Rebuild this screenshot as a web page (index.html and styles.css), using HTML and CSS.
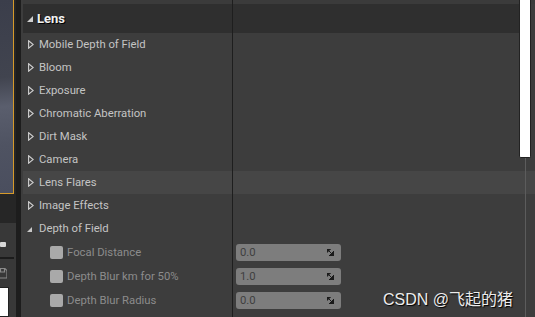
FILE: index.html
```html
<!DOCTYPE html>
<html>
<head>
<meta charset="utf-8">
<link rel="stylesheet" href="styles.css">
</head>
<body>
<div class="app">
  <div class="left">
    <div class="viewport"></div>
    <div class="tools">
      <div class="tool-icon"></div>
      <div class="tool-line"></div>
      <svg class="save" width="8" height="12" viewBox="0 0 8 12"><path d="M0 1.5 H6 L8 3.5 V11 H0 Z M1.5 1.5 V5 H5.5 V1.5" fill="none" stroke="#8a8a8a" stroke-width="1.2"/></svg>
      <div class="white-box"></div>
    </div>
  </div>
  <div class="gutter"></div>
  <div class="details">
    <div class="top-strip"></div>
    <div class="header"><span class="tri-down"></span><span class="header-text">Lens</span></div>
    <div class="row"><svg class="tri-right" width="6" height="9" viewBox="0 0 6 9"><path d="M0.6 0.8 L5.2 4.5 L0.6 8.2 Z" fill="none" stroke="#cfcfcf" stroke-width="1.1"/></svg>Mobile Depth of Field</div>
    <div class="row"><svg class="tri-right" width="6" height="9" viewBox="0 0 6 9"><path d="M0.6 0.8 L5.2 4.5 L0.6 8.2 Z" fill="none" stroke="#cfcfcf" stroke-width="1.1"/></svg>Bloom</div>
    <div class="row"><svg class="tri-right" width="6" height="9" viewBox="0 0 6 9"><path d="M0.6 0.8 L5.2 4.5 L0.6 8.2 Z" fill="none" stroke="#cfcfcf" stroke-width="1.1"/></svg>Exposure</div>
    <div class="row"><svg class="tri-right" width="6" height="9" viewBox="0 0 6 9"><path d="M0.6 0.8 L5.2 4.5 L0.6 8.2 Z" fill="none" stroke="#cfcfcf" stroke-width="1.1"/></svg>Chromatic Aberration</div>
    <div class="row"><svg class="tri-right" width="6" height="9" viewBox="0 0 6 9"><path d="M0.6 0.8 L5.2 4.5 L0.6 8.2 Z" fill="none" stroke="#cfcfcf" stroke-width="1.1"/></svg>Dirt Mask</div>
    <div class="row"><svg class="tri-right" width="6" height="9" viewBox="0 0 6 9"><path d="M0.6 0.8 L5.2 4.5 L0.6 8.2 Z" fill="none" stroke="#cfcfcf" stroke-width="1.1"/></svg>Camera</div>
    <div class="row hover"><svg class="tri-right" width="6" height="9" viewBox="0 0 6 9"><path d="M0.6 0.8 L5.2 4.5 L0.6 8.2 Z" fill="none" stroke="#cfcfcf" stroke-width="1.1"/></svg>Lens Flares</div>
    <div class="row"><svg class="tri-right" width="6" height="9" viewBox="0 0 6 9"><path d="M0.6 0.8 L5.2 4.5 L0.6 8.2 Z" fill="none" stroke="#cfcfcf" stroke-width="1.1"/></svg>Image Effects</div>
    <div class="row"><span class="tri-down small"></span>Depth of Field</div>
    <div class="prop">
      <div class="prop-name"><span class="check"></span>Focal Distance</div>
      <div class="value">0.0<svg class="spin" width="7" height="7" viewBox="0 0 7 7"><path d="M0 0 H3.5 L0 3.5 Z M7 7 V2 L2 7 Z M1 1 L6 6" fill="#1a1a1a" stroke="#1a1a1a" stroke-width="1"/></svg></div>
    </div>
    <div class="prop">
      <div class="prop-name"><span class="check"></span>Depth Blur km for 50%</div>
      <div class="value">1.0<svg class="spin" width="7" height="7" viewBox="0 0 7 7"><path d="M0 0 H3.5 L0 3.5 Z M7 7 V2 L2 7 Z M1 1 L6 6" fill="#1a1a1a" stroke="#1a1a1a" stroke-width="1"/></svg></div>
    </div>
    <div class="prop">
      <div class="prop-name"><span class="check"></span>Depth Blur Radius</div>
      <div class="value">0.0<svg class="spin" width="7" height="7" viewBox="0 0 7 7"><path d="M0 0 H3.5 L0 3.5 Z M7 7 V2 L2 7 Z M1 1 L6 6" fill="#1a1a1a" stroke="#1a1a1a" stroke-width="1"/></svg></div>
    </div>
    <div class="col-divider"></div>
    <div class="scroll-track"></div>
    <div class="scroll-thumb"></div>
    <div class="watermark">CSDN @飞起的猪</div>
  </div>
</div>
</body>
</html>
```
FILE: styles.css
```css
html, body {
  margin: 0;
  padding: 0;
  background: #262626;
  overflow: hidden;
}
.app {
  display: flex;
  width: 535px;
  height: 317px;
  font-family: Roboto, "Liberation Sans", sans-serif;
}
.left {
  width: 16px;
  display: flex;
  flex-direction: column;
  background: #262626;
}
.viewport {
  width: 13px;
  height: 193px;
  border-right: 1px solid #d69a2a;
  border-bottom: 1px solid #d69a2a;
  background: linear-gradient(175deg, #3b3e4b 0%, #41444f 40%, #5a5e6d 55%, #4f5362 75%, #4a4e5e 100%);
}
.tools {
  margin-top: 29px;
  flex: 1;
  background: #383838;
  display: flex;
  flex-direction: column;
}
.tool-icon {
  margin-top: 19px;
  width: 6px;
  height: 5px;
  background: #d8d8d8;
  border-radius: 1px;
}
.tool-line {
  margin-top: 10px;
  width: 14px;
  height: 2px;
  background: #1c1c1c;
}
.save {
  margin-top: 8px;
  margin-left: -1px;
}
.white-box {
  margin-top: 8px;
  width: 8px;
  flex: 1;
  background: #ffffff;
  border: 1px solid #222;
  border-left: none;
}
.gutter {
  width: 5px;
  background: #1d1d1d;
}
.details {
  position: relative;
  flex: 1;
  background: #3d3d3d;
  padding-left: 2px;
  display: flex;
  flex-direction: column;
}
.top-strip {
  height: 4px;
  background: #3b3b3b;
}
.header {
  height: 29px;
  margin-right: 12px;
  background: #2f2f2f;
  display: flex;
  align-items: center;
  padding-left: 4px;
}
.header-text {
  color: #f2f2f2;
  font-weight: bold;
  font-size: 13px;
  text-shadow: 1px 1px 0 #000;
  margin-left: 4px;
}
.tri-down {
  width: 0;
  height: 0;
  border-left: 6px solid transparent;
  border-bottom: 6px solid #cfcfcf;
  margin-top: 1px;
}
.tri-down.small {
  border-left-width: 5px;
  border-bottom-width: 5px;
  border-bottom-color: #c8c8c8;
  margin-right: 7px;
  margin-left: 0;
}
.row {
  height: 23px;
  display: flex;
  align-items: center;
  padding-left: 4px;
  color: #c4c4c4;
  font-size: 11.3px;
}
.row.hover {
  background: #464646;
}
.tri-right {
  margin-right: 5px;
  margin-left: 1px;
}
.prop {
  height: 24px;
  display: flex;
  align-items: center;
  font-size: 11.3px;
}
.prop-name {
  box-sizing: border-box;
  width: 213px;
  display: flex;
  align-items: center;
  padding-left: 27px;
  color: #8c8c8c;
}
.check {
  width: 13px;
  height: 13px;
  background: #a9a9a9;
  border-radius: 2px;
  margin-right: 4px;
}
.value {
  box-sizing: border-box;
  width: 105px;
  height: 17px;
  background: #7d7d7d;
  border-radius: 3px;
  display: flex;
  align-items: center;
  justify-content: space-between;
  padding: 0 7px 0 4px;
  color: #3f3f3f;
  font-size: 11.3px;
}
.col-divider {
  position: absolute;
  left: 211px;
  top: 0;
  bottom: 0;
  width: 1px;
  background: #1e1e1e;
}
.scroll-track {
  position: absolute;
  left: 504px;
  top: 158px;
  bottom: 0;
  width: 1px;
  background: #5c5c5c;
}
.scroll-thumb {
  position: absolute;
  left: 498px;
  top: 0;
  width: 10px;
  height: 157px;
  background: #ffffff;
  border: 1px solid #222;
  border-top: none;
  border-radius: 0 0 2px 2px;
}
.watermark {
  position: absolute;
  left: 362px;
  top: 286px;
  color: #ececec;
  font-size: 16px;
  font-family: "Liberation Sans", "Noto Sans CJK SC", sans-serif;
  text-shadow: 1px 1px 1px #000;
}
```
